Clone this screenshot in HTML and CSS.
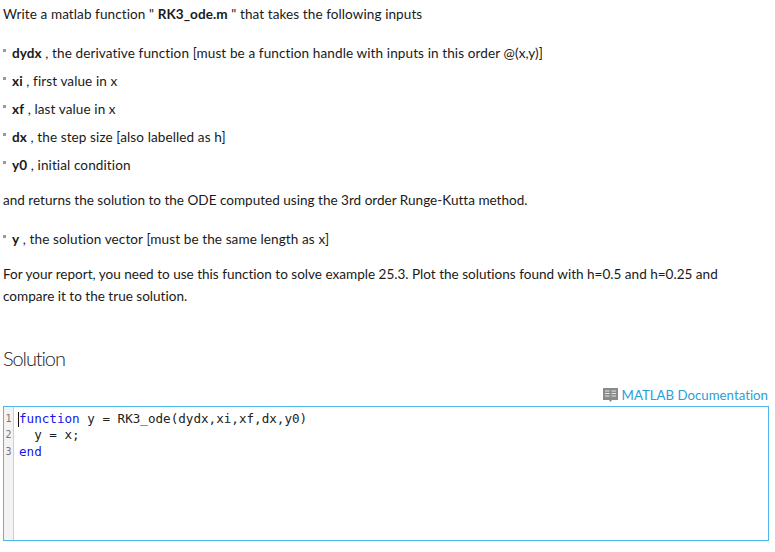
FILE: index.html
```html
<!DOCTYPE html>
<html lang="en">
<head>
<meta charset="UTF-8">
<meta name="viewport" content="width=device-width, initial-scale=1.0">
<title>RK3 ODE</title>
<link rel="stylesheet" href="styles.css">
</head>
<body>

<div class="problem">
  <p class="intro">Write a matlab function " <b>RK3_ode.m</b> " that takes the following inputs</p>
  <ul class="inputs">
    <li><b>dydx</b> , the derivative function [must be a function handle with inputs in this order @(x,y)]</li>
    <li><b>xi</b> , first value in x</li>
    <li><b>xf</b> , last value in x</li>
    <li><b>dx</b> , the step size [also labelled as h]</li>
    <li><b>y0</b> , initial condition</li>
  </ul>
  <p class="returns">and returns the solution to the ODE computed using the 3rd order Runge-Kutta method.</p>
  <ul class="outputs">
    <li><b>y</b> , the solution vector [must be the same length as x]</li>
  </ul>
  <p class="report">For your report, you need to use this function to solve example 25.3. Plot the solutions found with h=0.5 and h=0.25 and compare it to the true solution.</p>
</div>

<h2 class="solution-title">Solution</h2>

<div class="doc-row">
  <a class="doc-link">
    <svg class="doc-icon" width="15" height="16" viewBox="0 0 15 16">
      <path d="M0 1h15v12H9l-1.500 2L6 13H0z" fill="#8a8a8a"/>
      <path d="M2 4h4.500M2 6.500h4.500M2 9h4.500M8.500 4H13M8.500 6.500H13M8.500 9H13" stroke="#e4e4e4" stroke-width="1.200"/>
    </svg>
    MATLAB Documentation
  </a>
</div>

<div class="editor">
  <div class="gutter">
    <div>1</div>
    <div>2</div>
    <div>3</div>
  </div>
  <div class="code">
    <div class="line first"><span class="kw">function</span> y = RK3_ode(dydx,xi,xf,dx,y0)</div>
    <div class="line">  y = x;</div>
    <div class="line"><span class="kw">end</span></div>
  </div>
</div>

</body>
</html>
```

FILE: styles.css
```css
body {
  margin: 0;
  padding: 0 3px;
  background: white;
  color: #1a1a1a;
  font-family: "Lato", sans-serif;
  font-size: 13.550px;
  font-variant-ligatures: none;
  line-height: 22px;
  overflow: hidden;
}

p {
  margin: 0;
}

b {
  font-weight: 700;
}

.problem {
  padding-top: 3px;
}

.intro {
  letter-spacing: 0.080px;
}

.inputs {
  list-style: none;
  margin: 17px 0 0;
  padding: 0;
}

.outputs {
  list-style: none;
  margin: 17px 0 0;
  padding: 0;
}

.inputs li,
.outputs li {
  position: relative;
  padding-left: 9px;
  margin-bottom: 6px;
  letter-spacing: 0.100px;
}

.inputs li::before,
.outputs li::before {
  content: "";
  position: absolute;
  left: 0;
  top: 7px;
  width: 3px;
  height: 3px;
  background: #999;
}

.returns {
  margin-top: 13px;
}

.report {
  margin-top: 13px;
  padding-right: 8px;
}

.solution-title {
  margin: 37px 0 0;
  font-family: "Lato", sans-serif;
  font-size: 20px;
  font-weight: 300;
  line-height: 28px;
  letter-spacing: -1.100px;
  color: #222;
}

.doc-row {
  display: flex;
  justify-content: flex-end;
  margin-top: 13px;
  padding-right: 4px;
  height: 20px;
}

.doc-link {
  display: flex;
  align-items: center;
  gap: 4px;
  color: #2a9fd6;
  font-size: 13.250px;
}

.editor {
  display: flex;
  width: 766px;
  height: 135px;
  margin-top: 1px;
  box-sizing: border-box;
  border: 1px solid #4db8ee;
  font-family: "DejaVu Sans Mono", monospace;
  font-size: 12.600px;
  line-height: 16.250px;
}

.gutter {
  width: 9px;
  padding-top: 4px;
  background: #f3f3f3;
  border-right: 1px solid #cfcfcf;
  color: #777;
  font-size: 10px;
  text-align: center;
}

.code {
  padding: 4px 0 0 5px;
  color: #222;
}

.line {
  white-space: pre;
}

.kw {
  color: #1414ee;
}

.first {
  position: relative;
}

.first::before {
  content: "";
  position: absolute;
  left: -1px;
  top: 1px;
  width: 1px;
  height: 15px;
  background: #111;
}
```
